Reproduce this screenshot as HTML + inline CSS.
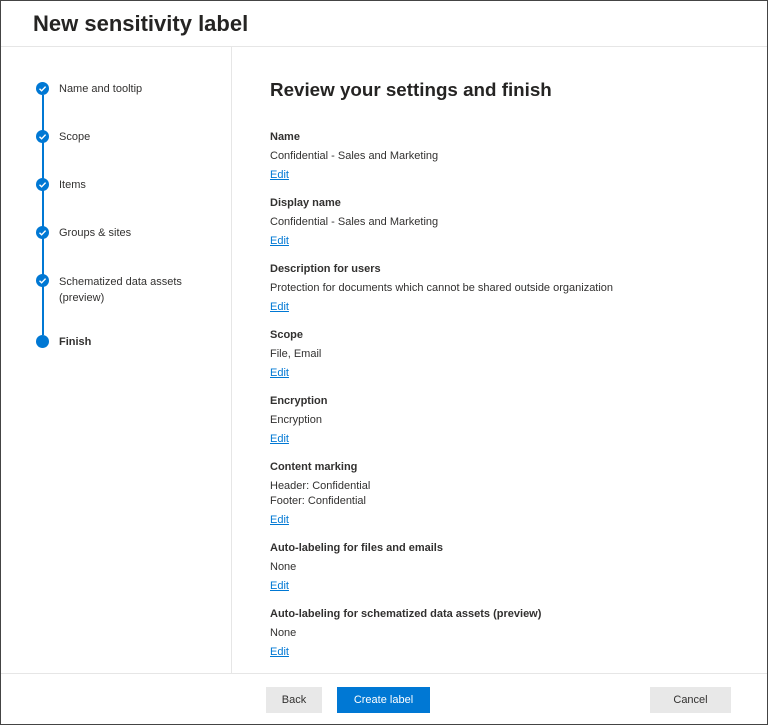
<!DOCTYPE html>
<html><head><style>
*{margin:0;padding:0;box-sizing:border-box}
body{width:768px;height:725px;overflow:hidden;font-family:"Liberation Sans",sans-serif;background:#fff;color:#323130;position:relative}
.frame{position:absolute;left:0;top:0;width:768px;height:725px;border:1px solid #444}
.t{position:absolute;white-space:nowrap;font-size:11px;line-height:14px}
.b{font-weight:bold}
.e{color:#0078d4;text-decoration:underline}
.c{position:absolute;left:36px;width:13px;height:13px;border-radius:50%;background:#0078d4}
.c svg{position:absolute;left:0;top:0}
.ln{position:absolute;left:41.5px;width:2px;background:#0078d4}
.btn{position:absolute;top:687px;height:26px;font-size:11px;line-height:26px;text-align:center;background:#e8e8e8;color:#323130}
</style></head><body>
<div class="t b" style="left:33px;top:10px;font-size:22px;line-height:28px;color:#252423">New sensitivity label</div>
<div style="position:absolute;left:1px;right:1px;top:46px;height:1px;background:#e6e6e6"></div>
<div style="position:absolute;left:231px;top:47px;width:1px;height:626px;background:#e6e6e6"></div>
<div style="position:absolute;left:1px;right:1px;top:673px;height:1px;background:#e6e6e6"></div>

<div class="ln" style="top:95px;height:240px"></div>
<div class="c" style="top:82px"><svg width="13" height="13"><path d="M3.5 6.8 L5.6 8.8 L9.6 4.6" stroke="#fff" stroke-width="1.4" fill="none"/></svg></div>
<div class="c" style="top:130px"><svg width="13" height="13"><path d="M3.5 6.8 L5.6 8.8 L9.6 4.6" stroke="#fff" stroke-width="1.4" fill="none"/></svg></div>
<div class="c" style="top:178px"><svg width="13" height="13"><path d="M3.5 6.8 L5.6 8.8 L9.6 4.6" stroke="#fff" stroke-width="1.4" fill="none"/></svg></div>
<div class="c" style="top:226px"><svg width="13" height="13"><path d="M3.5 6.8 L5.6 8.8 L9.6 4.6" stroke="#fff" stroke-width="1.4" fill="none"/></svg></div>
<div class="c" style="top:274px"><svg width="13" height="13"><path d="M3.5 6.8 L5.6 8.8 L9.6 4.6" stroke="#fff" stroke-width="1.4" fill="none"/></svg></div>
<div class="c" style="top:335px"></div>
<div class="t" style="left:59px;top:82px">Name and tooltip</div>
<div class="t" style="left:59px;top:130px">Scope</div>
<div class="t" style="left:59px;top:178px">Items</div>
<div class="t" style="left:59px;top:226px">Groups &amp; sites</div>
<div class="t" style="left:59px;top:274px;line-height:16px">Schematized data assets<br>(preview)</div>
<div class="t b" style="left:59px;top:335px">Finish</div>

<div class="t b" style="left:270px;top:78px;font-size:18.8px;line-height:24px;color:#252423">Review your settings and finish</div>

<div class="t b" style="left:270px;top:130px">Name</div>
<div class="t" style="left:270px;top:149px">Confidential - Sales and Marketing</div>
<div class="t e" style="left:270px;top:168px">Edit</div>

<div class="t b" style="left:270px;top:196px">Display name</div>
<div class="t" style="left:270px;top:215px">Confidential - Sales and Marketing</div>
<div class="t e" style="left:270px;top:234px">Edit</div>

<div class="t b" style="left:270px;top:262px">Description for users</div>
<div class="t" style="left:270px;top:281px">Protection for documents which cannot be shared outside organization</div>
<div class="t e" style="left:270px;top:300px">Edit</div>

<div class="t b" style="left:270px;top:328px">Scope</div>
<div class="t" style="left:270px;top:347px">File, Email</div>
<div class="t e" style="left:270px;top:366px">Edit</div>

<div class="t b" style="left:270px;top:394px">Encryption</div>
<div class="t" style="left:270px;top:413px">Encryption</div>
<div class="t e" style="left:270px;top:432px">Edit</div>

<div class="t b" style="left:270px;top:460px">Content marking</div>
<div class="t" style="left:270px;top:479px">Header: Confidential</div>
<div class="t" style="left:270px;top:494px">Footer: Confidential</div>
<div class="t e" style="left:270px;top:513px">Edit</div>

<div class="t b" style="left:270px;top:541px">Auto-labeling for files and emails</div>
<div class="t" style="left:270px;top:560px">None</div>
<div class="t e" style="left:270px;top:579px">Edit</div>

<div class="t b" style="left:270px;top:607px">Auto-labeling for schematized data assets (preview)</div>
<div class="t" style="left:270px;top:626px">None</div>
<div class="t e" style="left:270px;top:645px">Edit</div>

<div class="btn" style="left:266px;width:56px">Back</div>
<div class="btn" style="left:337px;width:93px;background:#0078d4;color:#fff">Create label</div>
<div class="btn" style="left:650px;width:81px">Cancel</div>
<div class="frame"></div>
</body></html>
